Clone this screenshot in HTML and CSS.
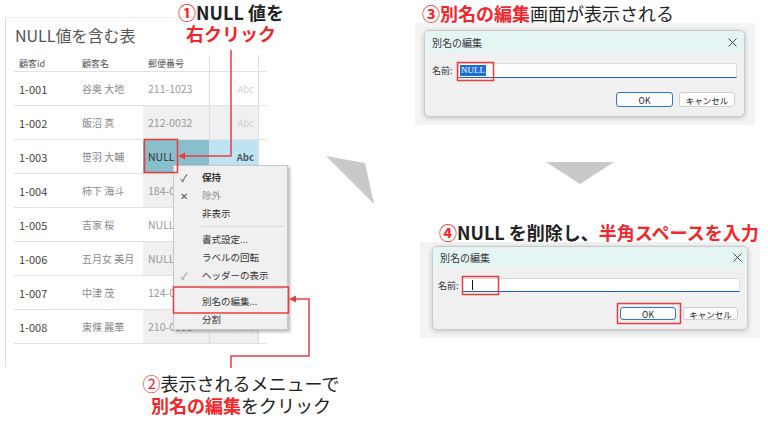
FILE: index.html
```html
<!DOCTYPE html>
<html lang="ja">
<head>
<meta charset="utf-8">
<title>別名の編集</title>
<link rel="stylesheet" href="styles.css">
</head>
<body>
<div class="canvas">
  <section class="sheet">
    <h1 class="sheet-title">NULL値を含む表</h1>
    <div class="table">
      <div class="row head">
        <div class="cell">顧客id</div><div class="cell">顧客名</div><div class="cell">郵便番号</div><div class="cell c4"></div>
      </div>
      <div class="row">
        <div class="cell id">1-001</div><div class="cell name">谷奥 大地</div><div class="cell zip">211-1023</div><div class="cell c4">Abc</div>
      </div>
      <div class="row band">
        <div class="cell id">1-002</div><div class="cell name">飯沼 真</div><div class="cell zip">212-0032</div><div class="cell c4">Abc</div>
      </div>
      <div class="row sel">
        <div class="cell id">1-003</div><div class="cell name">笹羽 大輔</div><div class="cell zip">NULL</div><div class="cell c4">Abc</div>
      </div>
      <div class="row band">
        <div class="cell id">1-004</div><div class="cell name">柿下 海斗</div><div class="cell zip">184-0013</div><div class="cell c4">Abc</div>
      </div>
      <div class="row">
        <div class="cell id">1-005</div><div class="cell name">吉家 桜</div><div class="cell zip">NULL</div><div class="cell c4">Abc</div>
      </div>
      <div class="row band">
        <div class="cell id">1-006</div><div class="cell name">五月女 美月</div><div class="cell zip">NULL</div><div class="cell c4">Abc</div>
      </div>
      <div class="row">
        <div class="cell id">1-007</div><div class="cell name">中津 茂</div><div class="cell zip">124-0011</div><div class="cell c4">Abc</div>
      </div>
      <div class="row band">
        <div class="cell id">1-008</div><div class="cell name">東條 麗華</div><div class="cell zip">210-0001</div><div class="cell c4">Abc</div>
      </div>
    </div>
  </section>

  <ul class="menu">
    <li><span class="mark">✓</span><span class="label strong">保持</span></li>
    <li><span class="mark x">✕</span><span class="label dim">除外</span></li>
    <li><span class="mark"></span><span class="label">非表示</span></li>
    <li class="sep"></li>
    <li><span class="mark"></span><span class="label">書式設定...</span></li>
    <li><span class="mark"></span><span class="label">ラベルの回転</span></li>
    <li><span class="mark light">✓</span><span class="label">ヘッダーの表示</span></li>
    <li class="sep"></li>
    <li><span class="mark"></span><span class="label">別名の編集...</span></li>
    <li><span class="mark"></span><span class="label">分割</span></li>
  </ul>

  <div class="shot shot1">
    <div class="dialog">
      <div class="titlebar"><span>別名の編集</span>
        <svg class="close" width="9" height="9" viewBox="0 0 9 9"><path d="M0.5 0.5L8.5 8.5M8.5 0.5L0.5 8.5"/></svg>
      </div>
      <div class="body">
        <div class="field"><span class="field-label">名前:</span><div class="input"><span class="selected">NULL</span></div></div>
        <div class="buttons"><div class="btn default">OK</div><div class="btn">キャンセル</div></div>
      </div>
    </div>
  </div>

  <div class="shot shot2">
    <div class="dialog">
      <div class="titlebar"><span>別名の編集</span>
        <svg class="close" width="9" height="9" viewBox="0 0 9 9"><path d="M0.5 0.5L8.5 8.5M8.5 0.5L0.5 8.5"/></svg>
      </div>
      <div class="body">
        <div class="field"><span class="field-label">名前:</span><div class="input"><span class="caret"></span></div></div>
        <div class="buttons"><div class="btn default">OK</div><div class="btn">キャンセル</div></div>
      </div>
    </div>
  </div>

  <p class="note note1"><span class="red">①</span>NULL 値を<br><span class="red">右クリック</span></p>
  <p class="note note2"><span class="red">②</span>表示されるメニューで<br><span class="red b">別名の編集</span>をクリック</p>
  <p class="note note3"><span class="red b">③別名の編集</span>画面が表示される</p>
  <p class="note note4"><span class="red">④</span>NULL を削除し、<span class="red">半角スペースを入力</span></p>

  <svg class="overlay" width="768" height="431" viewBox="0 0 768 431">
    <polygon class="hint" points="326,156 365,163 374,204"/>
    <polygon class="hint" points="546,162 614,162 580,184"/>
    <g class="redline">
      <rect x="144.5" y="139.5" width="33" height="33"/>
      <rect x="173.5" y="287" width="115" height="26"/>
      <rect x="457.5" y="62.5" width="36" height="18"/>
      <rect x="462.5" y="276.5" width="36" height="18"/>
      <rect x="617.5" y="303.5" width="63" height="20"/>
      <polyline points="231,50 231,156 183,156"/>
      <polyline points="295,299 309,299 309,356 231,356 231,368"/>
    </g>
    <polygon class="arrowhead" points="178,156 185,152.5 185,159.5"/>
    <polygon class="arrowhead" points="289,299 296,295.5 296,302.5"/>
  </svg>
</div>
</body>
</html>
```

FILE: styles.css
```css
* { box-sizing: border-box; margin: 0; padding: 0; }
body {
  margin: 0;
  background: #fff;
  font-family: "Noto Sans CJK JP", "Noto Sans", sans-serif;
}
.canvas {
  position: relative;
  width: 768px;
  height: 431px;
  overflow: hidden;
  background: #fff;
}

/* table screenshot */
.sheet {
  position: absolute;
  left: 5px;
  top: 17px;
  width: 262px;
  height: 350px;
  border-left: 1px solid #dcdcdc;
  border-top: 1px solid #f0f0f0;
  padding: 7px 0 0 8px;
}
.sheet-title {
  font-size: 16px;
  font-weight: 400;
  line-height: 20px;
  color: #555;
  padding-left: 1px;
  margin-bottom: 10px;
}
.row {
  display: grid;
  grid-template-columns: 63px 66px 66px 50px;
  height: 34px;
  border-bottom: 1px solid #e2e2e2;
}
.row.head {
  height: 17px;
  border-bottom: 1px solid #e2e2e2;
}
.cell {
  display: flex;
  align-items: center;
  padding-left: 5px;
  white-space: nowrap;
  overflow: hidden;
}
.head .cell {
  font-size: 9px;
  color: #555;
}
.id {
  font-size: 11px;
  color: #444;
}
.name {
  font-size: 10px;
  color: #8a8a8a;
}
.zip {
  font-size: 10.5px;
  color: #999;
}
.c4 {
  border-left: 1px solid #dcdcdc;
  border-right: 1px solid #dcdcdc;
  justify-content: flex-end;
  padding-right: 4px;
  font-size: 9.5px;
  color: #d0d0d0;
}
.band .zip, .band .c4 { background: #f0f0f0; }
.sel .zip { background: #89bfcd; color: #333; }
.sel .c4 { background: #bfe4f1; color: #4a5a66; font-weight: 700; }

/* context menu */
.menu {
  position: absolute;
  left: 173px;
  top: 165px;
  width: 115px;
  height: 165px;
  background: #f0f0f0;
  border: 1px solid #c8c8c8;
  box-shadow: 2px 2px 3px rgba(0, 0, 0, 0.28);
  padding-top: 2px;
  list-style: none;
  font-size: 9.5px;
  color: #333;
}
.menu li {
  display: flex;
  align-items: center;
  height: 18px;
}
.mark {
  width: 20px;
  text-align: center;
  font-size: 10px;
  color: #333;
}
.mark.x { color: #4d5866; }
.mark.light { color: #888; }
.label { margin-left: 8px; white-space: nowrap; }
.strong { font-weight: 700; }
.dim { color: #8f8f8f; }
.menu li.sep {
  display: block;
  height: 8px;
  padding: 3.5px 3px 0 27px;
}
.menu li.sep::after {
  content: "";
  display: block;
  border-top: 1px solid #d8d8d8;
}

/* dialog screenshots */
.shot {
  position: absolute;
  background: #f4f4f4;
}
.shot1 {
  left: 415px;
  top: 23px;
  width: 340px;
  height: 102px;
  padding: 7px 0 0 9px;
}
.shot2 {
  left: 420px;
  top: 242px;
  width: 340px;
  height: 96px;
  padding: 4px 0 0 12px;
}
.dialog {
  background: #f0f0f0;
  border: 1px solid #cacaca;
  border-radius: 5px;
  box-shadow: 0 1px 5px rgba(0, 0, 0, 0.22);
  overflow: hidden;
  font-size: 9px;
  color: #333;
}
.shot1 .dialog { width: 321px; height: 87px; }
.shot2 .dialog { width: 316px; height: 84px; }
.titlebar {
  display: flex;
  align-items: center;
  justify-content: space-between;
  height: 22px;
  background: #e5f5f3;
  padding: 0 7px;
  font-size: 10px;
}
.shot2 .titlebar { height: 21px; padding-right: 5px; }
.close path { stroke: #444; stroke-width: 1; fill: none; }
.body { padding: 10px 7px 0 7px; }
.shot2 .body { padding-left: 5px; }
.field { display: flex; align-items: center; }
.field-label { width: 26px; flex: none; }
.shot2 .field-label { width: 24px; }
.input {
  flex: 1;
  height: 15px;
  background: #fff;
  border: 1px solid #dcdcdc;
  border-bottom: 1.5px solid #1b62c0;
  display: flex;
  align-items: center;
  padding-left: 1px;
}
.shot2 .input { height: 14px; }
.selected {
  background: #1f6fd2;
  color: #fff;
  font-family: "Liberation Serif", serif;
  font-size: 9px;
  line-height: 11px;
  padding: 0 1px;
}
.caret {
  display: block;
  width: 1px;
  height: 10px;
  background: #111;
  margin-left: 8px;
}
.buttons {
  display: flex;
  justify-content: flex-end;
  gap: 6px;
  margin-top: 14px;
  padding-right: 2px;
}
.shot2 .buttons { gap: 7px; margin-top: 15px; }
.btn {
  width: 57px;
  height: 15px;
  border: 1px solid #cfcfcf;
  border-radius: 3px;
  background: #fdfdfd;
  display: flex;
  align-items: center;
  justify-content: center;
  font-size: 8.5px;
  color: #222;
}
.btn + .btn { width: 56px; }
.btn.default { border: 1.5px solid #2a78d2; }
.shot2 .btn { height: 13px; width: 56px; }
.shot2 .btn + .btn { width: 55px; }

/* annotations */
.note {
  position: absolute;
  font-size: 18px;
  line-height: 21px;
  color: #222;
  white-space: nowrap;
}
.red { color: #f2262b; }
.b { font-weight: 700; }
.note1 {
  left: 166px;
  top: 2px;
  width: 130px;
  text-align: center;
  font-weight: 700;
}
.note2 {
  left: 131px;
  top: 372px;
  width: 220px;
  text-align: center;
  line-height: 22px;
}
.note3 { left: 422px; top: 2px; line-height: 22px; }
.note4 { left: 439px; top: 221px; line-height: 22px; font-weight: 700; }

/* overlay: connectors, highlight boxes, hint arrows */
.overlay {
  position: absolute;
  left: 0;
  top: 0;
  pointer-events: none;
}
.hint { fill: #c9c9c9; }
.redline rect, .redline polyline {
  fill: none;
  stroke: #ea3c3f;
  stroke-width: 1.5;
}
.arrowhead { fill: #ea3c3f; }
```
